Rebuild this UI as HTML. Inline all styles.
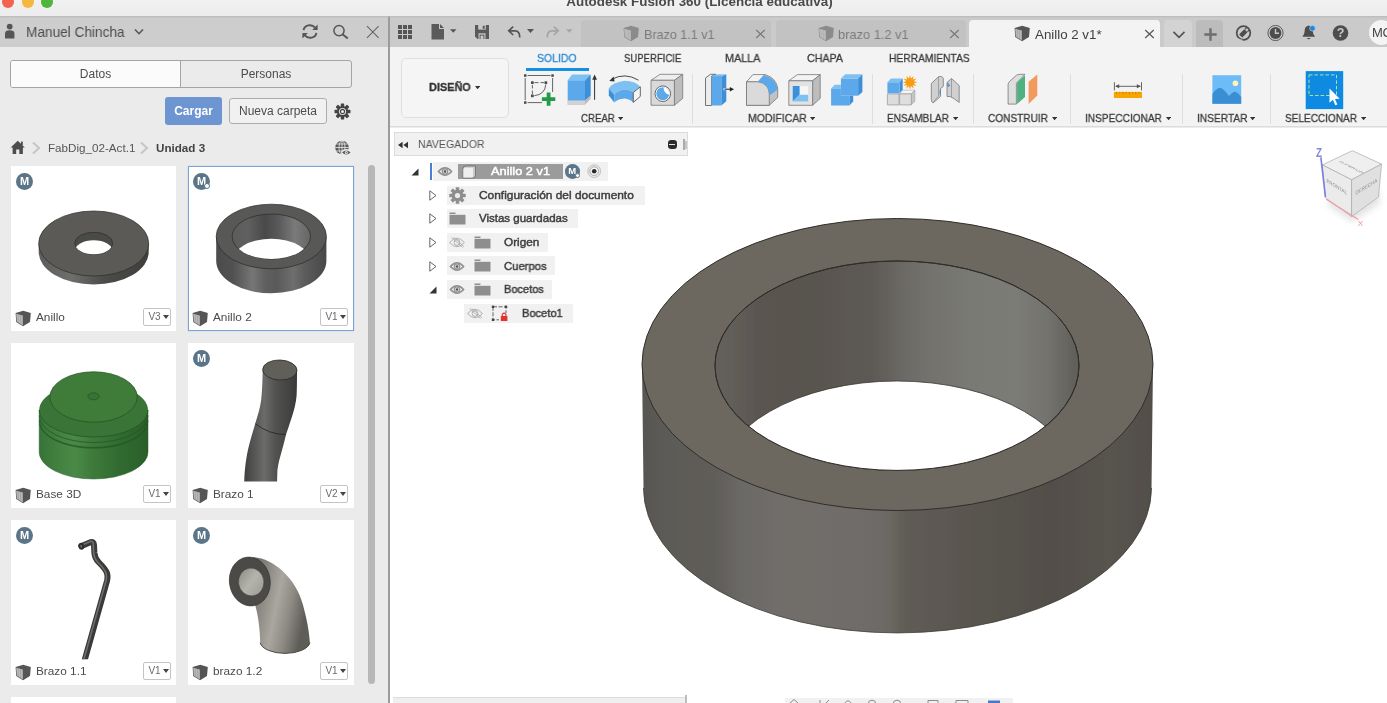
<!DOCTYPE html>
<html><head><meta charset="utf-8">
<style>
*{box-sizing:border-box;margin:0;padding:0}
html,body{width:1387px;height:703px;overflow:hidden;background:#ececec;font-family:"Liberation Sans",sans-serif;color:#444}
.a{position:absolute}
.t{position:absolute;white-space:nowrap;line-height:1}
#titlebar{left:0;top:0;width:1387px;height:16px;background:linear-gradient(#f1f1f1,#ececec)}
#title{left:0;width:1387px;top:-5px;text-align:center;font-weight:bold;font-size:13.4px;color:#4a4a4a;padding-left:12px}
.tl{position:absolute;width:12px;height:12px;border-radius:6px;top:-4px}
/* left panel */
#lp{left:0;top:16px;width:388px;height:687px;background:#ebebeb;overflow:hidden}
#lph{left:0;top:0;width:388px;height:31px;background:#cdcdcd}
#divider{left:388px;top:16px;width:2px;height:687px;background:#9b9b9b}
.card{position:absolute;width:165.3px;height:165px;background:#fff}
.card.sel{box-shadow:inset 0 0 0 1px #7ba3d8,0 0 1px #9dbbe2}
.mb{position:absolute;left:5.3px;top:7.1px;width:17px;height:17px;border-radius:9px;background:#5a7488;color:#fff;font-weight:bold;font-size:11px;text-align:center;line-height:17px}
.cl{position:absolute;left:25.8px;top:146.1px;font-size:11.8px;color:#4a4a4a;white-space:nowrap;line-height:1}
.vb{position:absolute;left:132px;top:142.3px;width:28.2px;height:17.5px;border:1px solid #c4c4c4;border-radius:2px;background:#fff;font-size:10px;color:#6a6a6a;line-height:15.6px;padding-left:4.6px;white-space:nowrap;letter-spacing:-0.2px}
.vb i{position:absolute;right:1.4px;top:5.6px;border:3.6px solid transparent;border-top:4.8px solid #444;border-bottom:0}
.cube{position:absolute;left:4.4px;top:144.4px}
/* right */
#tabbar{left:390px;top:16px;width:997px;height:31px;background:#cacaca}
#toolbar{left:390px;top:47px;width:997px;height:80px;background:#f3f3f3;border-bottom:1px solid #dcdcdc}
#canvas{left:390px;top:128px;width:997px;height:575px;background:#fff}
.tab{position:absolute;height:27px;border-radius:4px 4px 0 0;background:#c2c2c2}
.tab.act{background:#f3f3f3}
.tabt{position:absolute;top:8px;font-size:13px;color:#8c8c8c;white-space:nowrap;line-height:1}
.rt{position:absolute;top:54.5px;font-size:11px;color:#3c3c3c;white-space:nowrap;line-height:1;letter-spacing:-0.2px}
.gl{position:absolute;top:113px;font-size:11px;color:#3c3c3c;white-space:nowrap;line-height:1;letter-spacing:-0.2px}
.gl i,.dd{display:inline-block;border:2.6px solid transparent;border-top:3.6px solid #333;border-bottom:0;vertical-align:middle;margin-left:4px;margin-top:-2px}
.sep{position:absolute;top:74px;width:1px;height:50px;background:#dedede}
.nr{position:absolute;height:19px;background:#f1f1f1}
.nt{position:absolute;font-size:11.5px;color:#3d3d3d;white-space:nowrap;line-height:1;font-weight:bold;letter-spacing:-0.1px}
.t,.tabt,.cl,.vb,.mb,.nt,.gs{will-change:transform}
</style></head><body>

<div id="titlebar" class="a">
 <div class="tl" style="left:2px;background:#f4634f"></div>
 <div class="tl" style="left:21.5px;background:#f6b73e"></div>
 <div class="tl" style="left:41px;background:#4fb53c"></div>
 <div id="title" class="t">Autodesk Fusion 360 (Licencia educativa)</div>
</div>
<div id="lp" class="a">
 <div id="lph" class="a"></div>
</div>

<div id="divider" class="a"></div>
<div id="tabbar" class="a"></div>
<div id="toolbar" class="a"></div>
<div id="canvas" class="a"></div>
<div class="a" style="left:0;top:16px;width:1387px;height:2px;background:linear-gradient(#b9b9b9,rgba(190,190,190,0))"></div>

<!-- LEFT PANEL CONTENT (page coords) -->
<div id="L" class="a" style="left:0;top:0;width:388px;height:703px;overflow:hidden">
 <!-- header -->
 <svg class="a" style="left:4px;top:22px" width="12" height="18" viewBox="0 0 12 18"><circle cx="5.7" cy="4.6" r="2.9" fill="#555"/><path d="M1 16.5 V11.5 Q1 8.2 5.7 8.2 Q10.4 8.2 10.4 11.5 V16.5 Z" fill="#555"/></svg>
 <div class="t" style="left:25.5px;top:24.6px;font-size:14.6px;color:#4d4d4d;transform-origin:0 0;transform:scaleX(0.9349)">Manuel Chincha</div>
 <svg class="a" style="left:133px;top:27px" width="12" height="10" viewBox="0 0 12 10"><path d="M2 2.5 L6 6.7 L10 2.5" fill="none" stroke="#555" stroke-width="1.6"/></svg>
 <!-- refresh -->
 <svg class="a" style="left:300px;top:23px" width="20" height="17" viewBox="0 0 20 17"><path d="M3.6 7.2 A6.3 5.6 0 0 1 15 4.6" fill="none" stroke="#555" stroke-width="1.9"/><path d="M16.4 9.8 A6.3 5.6 0 0 1 5 12.4" fill="none" stroke="#555" stroke-width="1.9"/><path d="M17.6 1.6 V7 H12.2 Z" fill="#555"/><path d="M2.4 15.4 V10 H7.8 Z" fill="#555"/></svg>
 <!-- search -->
 <svg class="a" style="left:331px;top:23px" width="20" height="18" viewBox="0 0 20 18"><circle cx="8" cy="7.6" r="5.1" fill="none" stroke="#555" stroke-width="1.5"/><path d="M11.8 11.6 L16.8 15.6" stroke="#555" stroke-width="1.9"/></svg>
 <!-- close -->
 <svg class="a" style="left:365px;top:24px" width="16" height="16" viewBox="0 0 16 16"><path d="M2 2.2 L13.6 13.8 M13.6 2.2 L2 13.8" stroke="#666" stroke-width="1.1"/></svg>
 <!-- tabs -->
 <div class="a" style="left:10px;top:60px;width:342px;height:27.5px;border:1px solid #a4a4a4;border-radius:3px;background:#ebebeb"></div>
 <div class="a" style="left:11px;top:61px;width:170px;height:25.5px;background:#fbfbfb;border-right:1px solid #a4a4a4;border-radius:2px 0 0 2px"></div>
 <div class="t" style="left:11px;width:169px;top:68px;text-align:center;font-size:12px;color:#4d4d4d">Datos</div>
 <div class="t" style="left:181px;width:170px;top:68px;text-align:center;font-size:12px;color:#4d4d4d">Personas</div>
 <!-- buttons -->
 <div class="a" style="left:165px;top:97px;width:57px;height:27.5px;background:#6c95d2;border-radius:3px"></div>
 <div class="t" style="left:165px;width:57px;top:104.5px;text-align:center;font-size:12px;font-weight:bold;color:#fff">Cargar</div>
 <div class="a" style="left:228.5px;top:98px;width:98px;height:26px;border:1px solid #adadad;border-radius:3px;background:#f1f1f1"></div>
 <div class="t" style="left:228.5px;width:98px;top:105px;text-align:center;font-size:12px;color:#4d4d4d">Nueva carpeta</div>
 <svg class="a" id="gear1" style="left:334px;top:102.5px" width="17" height="17" viewBox="-8.5 -8.5 17 17"><g fill="#444"><circle r="5.6"/><g id="gt"><rect x="-1.7" y="-8" width="3.4" height="16" rx=".6"/></g><use href="#gt" transform="rotate(45)"/><use href="#gt" transform="rotate(90)"/><use href="#gt" transform="rotate(135)"/></g><circle r="3.6" fill="#ebebeb"/><circle r="2.1" fill="none" stroke="#444" stroke-width="1.2"/></svg>
 <!-- breadcrumb -->
 <svg class="a" style="left:9.800px;top:140.200px" width="15.500" height="15" viewBox="0 0 16 15" preserveAspectRatio="none"><path d="M8 .8 L15.3 7.6 H13.3 V14 H9.6 V9.6 H6.4 V14 H2.7 V7.6 H.7 Z" fill="#4d4d4d"/><rect x="11.3" y="1.6" width="1.9" height="3.6" fill="#4d4d4d"/></svg>
 <svg class="a" style="left:31px;top:141px" width="10" height="14" viewBox="0 0 10 14"><path d="M2 1.5 L8 7 L2 12.5" fill="none" stroke="#c6c6c6" stroke-width="2.1"/></svg>
 <div class="t" style="left:47.5px;top:141.5px;font-size:11.65px;color:#555">FabDig_02-Act.1</div>
 <svg class="a" style="left:139px;top:141px" width="10" height="14" viewBox="0 0 10 14"><path d="M2 1.5 L8 7 L2 12.5" fill="none" stroke="#c6c6c6" stroke-width="2.1"/></svg>
 <div class="t" style="left:155.5px;top:141.5px;font-size:11.65px;font-weight:bold;color:#444">Unidad 3</div>
 <!-- globe -->
 <svg class="a" style="left:334px;top:140px" width="18" height="17" viewBox="0 0 18 17"><circle cx="8" cy="7.5" r="6.8" fill="#5a5a5a"/><g stroke="#ebebeb" stroke-width=".8" fill="none"><ellipse cx="8" cy="7.5" rx="3" ry="6.8"/><path d="M1.2 7.5 H14.8 M2.2 4 H13.8 M2.2 11 H13.8 M8 .7 V14.3"/></g><ellipse cx="12.3" cy="12.6" rx="5.2" ry="3.6" fill="#ebebeb"/><path d="M8 12.6 Q12.3 8.6 16.6 12.6 Q12.3 16.6 8 12.6 Z" fill="#5a5a5a"/><circle cx="12.3" cy="12.6" r="1.5" fill="#ebebeb"/><circle cx="12.3" cy="12.6" r=".7" fill="#5a5a5a"/></svg>
 <!-- scrollbar -->
 <div class="a" style="left:368.3px;top:164.5px;width:7.2px;height:519.5px;border-radius:4px;background:#b7b7b7"></div>
 <div class="card" style="left:10.7px;top:166px"><svg class="a" style="left:0;top:0" width="166" height="165" viewBox="0 0 166 165">
<defs><linearGradient id="g1" x1="0" x2="1"><stop offset="0" stop-color="#5c5c5a"/><stop offset=".3" stop-color="#6e6e6c"/><stop offset=".6" stop-color="#4b4b49"/><stop offset="1" stop-color="#3e3e3c"/></linearGradient></defs>
<path d="M27.7 77.5 V86 A55 32.5 0 0 0 137.700 86 V77.5 Z" fill="url(#g1)"/>
<ellipse cx="82.700" cy="77.5" rx="55" ry="32.5" fill="#5c5a56" stroke="#2c2c2b" stroke-width=".7"/>
<clipPath id="c1"><ellipse cx="82.700" cy="77.3" rx="19" ry="11"/></clipPath>
<ellipse cx="82.700" cy="77.3" rx="19" ry="11" fill="#4a4a48" stroke="#2c2c2b" stroke-width=".7"/>
<ellipse cx="82.700" cy="85.3" rx="19" ry="11" fill="#fff" clip-path="url(#c1)"/>
</svg><div class="mb">M</div><svg class="cube" width="17" height="17" viewBox="0 0 17 17"><path d="M.6 3 L8.2 .8 L15.8 3 L15 12 L8 16.3 L1.2 12 Z" fill="#555"/><path d="M1.2 3.7 L7.8 5.6 V15.4 L1.8 11.6 Z" fill="#b9b9b9"/><path d="M3.3 4.5 V12.6 M5.6 5.1 V14" stroke="#9a9a9a" stroke-width=".6"/></svg><div class="cl">Anillo</div><div class="vb">V3<i></i></div></div><div class="card sel" style="left:187.5px;top:166px;width:166px"><svg class="a" style="left:0;top:0" width="166" height="165" viewBox="0 0 166 165">
<defs><linearGradient id="g2" x1="0" x2="1"><stop offset="0" stop-color="#4c4c4c"/><stop offset=".15" stop-color="#515151"/><stop offset=".33" stop-color="#767676"/><stop offset=".45" stop-color="#5f5f5f"/><stop offset=".55" stop-color="#5a5a5a"/><stop offset=".70" stop-color="#6e6e6e"/><stop offset=".80" stop-color="#5c5c5c"/><stop offset="1" stop-color="#484848"/></linearGradient>
<linearGradient id="g2b" x1="0" x2="1"><stop offset="0" stop-color="#5c5c5c"/><stop offset=".2" stop-color="#606060"/><stop offset=".42" stop-color="#494949"/><stop offset=".6" stop-color="#5a5a5a"/><stop offset=".8" stop-color="#7a7a7a"/><stop offset="1" stop-color="#666"/></linearGradient></defs>
<path d="M28.2 70.5 V95 A55.100 32.3 0 0 0 138.400 95 V70.5 Z" fill="url(#g2)"/>
<ellipse cx="83.300" cy="70.5" rx="55.100" ry="32.3" fill="#585856" stroke="#2a2a29" stroke-width=".7"/>
<clipPath id="c2"><ellipse cx="83.300" cy="70.5" rx="39.2" ry="22.5"/></clipPath>
<ellipse cx="83.300" cy="70.5" rx="39.2" ry="22.5" fill="url(#g2b)" stroke="#2a2a29" stroke-width=".7"/>
<ellipse cx="83.300" cy="95.3" rx="39.2" ry="22.5" fill="#fff" clip-path="url(#c2)"/>
</svg><div class="mb">M</div><div class="a" style="left:16.5px;top:16.5px;width:6px;height:6px;border-radius:3px;background:#fff;border:1px solid #5a7488"></div><svg class="cube" width="17" height="17" viewBox="0 0 17 17"><path d="M.6 3 L8.2 .8 L15.8 3 L15 12 L8 16.3 L1.2 12 Z" fill="#555"/><path d="M1.2 3.7 L7.8 5.6 V15.4 L1.8 11.6 Z" fill="#b9b9b9"/><path d="M3.3 4.5 V12.6 M5.6 5.1 V14" stroke="#9a9a9a" stroke-width=".6"/></svg><div class="cl">Anillo 2</div><div class="vb">V1<i></i></div></div><div class="card" style="left:10.7px;top:343px"><svg class="a" style="left:0;top:0" width="166" height="165" viewBox="0 0 166 165">
<defs><linearGradient id="g3" x1="0" x2="1"><stop offset="0" stop-color="#37733a"/><stop offset=".12" stop-color="#3f7d3d"/><stop offset=".32" stop-color="#4a8a47"/><stop offset=".5" stop-color="#3d7a3a"/><stop offset=".75" stop-color="#316a30"/><stop offset="1" stop-color="#2a5e29"/></linearGradient></defs>
<path d="M28.2 67 V109 A54.400 27 0 0 0 137 109 V67 Z" fill="url(#g3)" stroke="#2a5a28" stroke-width=".5"/>
<ellipse cx="82.600" cy="67" rx="54.400" ry="27" fill="#3a7436"/>
<path d="M28.2 67 A54.400 27 0 0 0 137 67 M28.2 72.500 A54.400 27 0 0 0 137 72.500 M28.2 77.500 A54.400 27 0 0 0 137 77.500 M28.600 81.500 A54.400 27 0 0 0 136.600 81.500" fill="none" stroke="#235423" stroke-width=".75"/>
<ellipse cx="82.600" cy="54" rx="43.700" ry="25.200" fill="#3f7c3a" stroke="#235423" stroke-width=".75"/>
<ellipse cx="82.500" cy="53.300" rx="5.700" ry="3.500" fill="#387335" stroke="#235423" stroke-width=".75"/>
</svg><svg class="cube" width="17" height="17" viewBox="0 0 17 17"><path d="M.6 3 L8.2 .8 L15.8 3 L15 12 L8 16.3 L1.2 12 Z" fill="#555"/><path d="M1.2 3.7 L7.8 5.6 V15.4 L1.8 11.6 Z" fill="#b9b9b9"/><path d="M3.3 4.5 V12.6 M5.6 5.1 V14" stroke="#9a9a9a" stroke-width=".6"/></svg><div class="cl">Base 3D</div><div class="vb">V1<i></i></div></div><div class="card" style="left:187.5px;top:343px;width:166px"><svg class="a" style="left:0;top:0" width="166" height="165" viewBox="0 0 166 165">
<defs><linearGradient id="g4" x1="0" x2="1"><stop offset="0" stop-color="#3e3e3c"/><stop offset=".12" stop-color="#4e4e4c"/><stop offset=".38" stop-color="#6b6b69"/><stop offset=".6" stop-color="#51514f"/><stop offset=".85" stop-color="#434341"/><stop offset="1" stop-color="#393937"/></linearGradient>
<clipPath id="c4"><rect x="0" y="0" width="166" height="138.500"/></clipPath></defs>
<g clip-path="url(#c4)">
<path d="M74.700 27 C74.500 40 74 50 73.200 56.800 C72 66 69.500 73 67.200 80.700 C64 92 61 101 59.200 110.500 C57.500 120 56.500 128 56.200 140 H89.100 C89.200 134 89.300 130 89.500 126.400 C90.500 120 91.500 116 93.100 110.500 C95 104 96.500 98 98 91.600 C100 86 101.500 81 103 76.700 C106 68 108 60 108.600 52.800 C109 45 109 35 109 27 Z" fill="url(#g4)"/>
<path d="M67.200 80.700 Q81 91.500 98 91.600" fill="none" stroke="#242423" stroke-width=".8"/>
<ellipse cx="91.850" cy="27" rx="17.200" ry="10" fill="#615f5a" stroke="#2a2a29" stroke-width=".8" transform="rotate(2 91.850 27)"/>
</g>
</svg><div class="mb">M</div><svg class="cube" width="17" height="17" viewBox="0 0 17 17"><path d="M.6 3 L8.2 .8 L15.8 3 L15 12 L8 16.3 L1.2 12 Z" fill="#555"/><path d="M1.2 3.7 L7.8 5.6 V15.4 L1.8 11.6 Z" fill="#b9b9b9"/><path d="M3.3 4.5 V12.6 M5.6 5.1 V14" stroke="#9a9a9a" stroke-width=".6"/></svg><div class="cl">Brazo 1</div><div class="vb">V2<i></i></div></div><div class="card" style="left:10.7px;top:519.7px"><svg class="a" style="left:0;top:0" width="166" height="165" viewBox="0 0 166 165">
<defs><clipPath id="c5"><rect x="0" y="0" width="166" height="139.200"/></clipPath></defs>
<g clip-path="url(#c5)" fill="none" stroke-linecap="round" stroke-linejoin="round">
<path d="M70.500 26 L79.500 22.200 Q82.800 21.300 83 25 L83.400 33 Q83.800 38 87.500 42 Q94.500 49 96 53 Q97 57 96 61 L72 146" stroke="#3a3a38" stroke-width="6"/>
<path d="M71.500 24.800 L79.500 21.400 Q82 20.800 82.300 24 L82.600 33 Q83 38 86.800 42.300 Q93.500 49 95 53 Q96 57 95 61 L71 146" stroke="#6e6e6c" stroke-width="1.600"/>
</g>
<ellipse cx="70.300" cy="26.300" rx="2.900" ry="3.500" fill="#2b2b2a" transform="rotate(-15 70.300 26.300)"/><ellipse cx="70.200" cy="26.300" rx="1.100" ry="1.500" fill="#666" transform="rotate(-15 70.200 26.300)"/>
</svg><div class="mb">M</div><svg class="cube" width="17" height="17" viewBox="0 0 17 17"><path d="M.6 3 L8.2 .8 L15.8 3 L15 12 L8 16.3 L1.2 12 Z" fill="#555"/><path d="M1.2 3.7 L7.8 5.6 V15.4 L1.8 11.6 Z" fill="#b9b9b9"/><path d="M3.3 4.5 V12.6 M5.6 5.1 V14" stroke="#9a9a9a" stroke-width=".6"/></svg><div class="cl">Brazo 1.1</div><div class="vb">V1<i></i></div></div><div class="card" style="left:187.5px;top:519.7px;width:166px"><svg class="a" style="left:0;top:0" width="166" height="165" viewBox="0 0 166 165">
<defs><linearGradient id="g6" x1="0" y1="0" x2="1" y2=".35"><stop offset="0" stop-color="#6a6862"/><stop offset=".3" stop-color="#8e8c85"/><stop offset=".52" stop-color="#a9a79f"/><stop offset=".75" stop-color="#8c8a83"/><stop offset="1" stop-color="#5f5d57"/></linearGradient>
<linearGradient id="g6h" x1="0" y1="0" x2="1" y2="1"><stop offset="0" stop-color="#8a8982"/><stop offset=".5" stop-color="#b4b3ac"/><stop offset="1" stop-color="#9a9992"/></linearGradient></defs>
<path d="M65.200 37.200 C85 38 108 58 115 84.900 C119 100 121 110 121.900 122.700 A25 12 0 0 1 72.200 122.700 C72 108 70 95 67.200 84.900 Z" fill="url(#g6)"/>
<path d="M121.900 122.700 A25 12 0 0 1 72.200 122.700" fill="none" stroke="#4a4844" stroke-width="1"/>
<ellipse cx="61.800" cy="61.500" rx="20.400" ry="24.500" fill="#4b4a47" stroke="#2f2f2d" stroke-width=".6" transform="rotate(-8 61.800 61.500)"/>
<ellipse cx="63.200" cy="62" rx="12.700" ry="14" fill="url(#g6h)" stroke="#3a3937" stroke-width=".5" transform="rotate(-8 63.200 62)"/>
</svg><div class="mb">M</div><svg class="cube" width="17" height="17" viewBox="0 0 17 17"><path d="M.6 3 L8.2 .8 L15.8 3 L15 12 L8 16.3 L1.2 12 Z" fill="#555"/><path d="M1.2 3.7 L7.8 5.6 V15.4 L1.8 11.6 Z" fill="#b9b9b9"/><path d="M3.3 4.5 V12.6 M5.6 5.1 V14" stroke="#9a9a9a" stroke-width=".6"/></svg><div class="cl">brazo 1.2</div><div class="vb">V1<i></i></div></div><div class="card" style="left:10.7px;top:696.8px"></div>
</div>
<!-- TAB BAR CONTENT (page coords) -->
<div id="TB" class="a" style="left:0;top:0;width:1387px;height:128px;pointer-events:none">
 <!-- grid -->
 <svg class="a" style="left:398px;top:25px" width="14" height="14" viewBox="0 0 14 14"><g fill="#555"><rect x="0" y="0" width="4" height="4"/><rect x="5" y="0" width="4" height="4"/><rect x="10" y="0" width="4" height="4"/><rect x="0" y="5" width="4" height="4"/><rect x="5" y="5" width="4" height="4"/><rect x="10" y="5" width="4" height="4"/><rect x="0" y="10" width="4" height="4"/><rect x="5" y="10" width="4" height="4"/><rect x="10" y="10" width="4" height="4"/></g></svg>
 <!-- file -->
 <svg class="a" style="left:431px;top:24px" width="14" height="16" viewBox="0 0 14 16"><path d="M.5 0 H8 V5 H13 V15.5 H.5 Z M9 0 L13 4 H9 Z" fill="#5a5a5a"/></svg>
 <svg class="a" style="left:450px;top:29.2px" width="6.500" height="4" viewBox="0 0 7 4"><path d="M0 0 H7 L3.500 4 Z" fill="#555"/></svg>
 <!-- save -->
 <svg class="a" style="left:475px;top:25px" width="14" height="14" viewBox="0 0 14 14"><path d="M0 0 H14 V14 H2.5 L0 11.500 Z" fill="#5a5a5a"/><rect x="3.200" y="0" width="7.600" height="4.600" fill="#cacaca"/><rect x="7.700" y=".8" width="2" height="3" fill="#5a5a5a"/><rect x="3.500" y="8.300" width="7" height="5.700" fill="#cacaca"/><rect x="4.600" y="9.600" width="4.800" height="4.400" fill="#5a5a5a"/><rect x="5.600" y="10.600" width="2.800" height="3.400" fill="#cacaca"/></svg>
 <!-- undo -->
 <svg class="a" style="left:507px;top:25px" width="15" height="14" viewBox="0 0 15 14"><path d="M6.200 1.600 L1.700 5.800 L6.200 10 M2 5.800 H8 Q12.800 5.800 12.800 12.600" fill="none" stroke="#555" stroke-width="1.700"/></svg>
 <svg class="a" style="left:527px;top:29.2px" width="7" height="4" viewBox="0 0 7 4"><path d="M0 0 H7 L3.500 4 Z" fill="#555"/></svg>
 <!-- redo -->
 <svg class="a" style="left:545px;top:25px" width="15" height="14" viewBox="0 0 15 14"><path d="M8.800 1.600 L13.300 5.800 L8.800 10 M13 5.800 H7 Q2.200 5.800 2.200 12.600" fill="none" stroke="#a4a4a4" stroke-width="1.700"/></svg>
 <svg class="a" style="left:566px;top:29.2px" width="6.500" height="4" viewBox="0 0 7 4"><path d="M0 0 H7 L3.500 4 Z" fill="#a4a4a4"/></svg>
 <!-- tabs -->
 <div class="tab" style="left:580.5px;width:190px;top:20px"></div>
 <div class="tab" style="left:775.5px;width:190.5px;top:20px"></div>
 <div class="tab act" style="left:969px;width:191px;top:20px"></div>
 <svg class="a" style="left:623px;top:25px;opacity:.5" width="17" height="17" viewBox="0 0 17 17"><use href="#cubeI"/></svg>
 <div class="tabt" style="left:643.5px;top:27.5px;color:#7b7b7b;transform-origin:0 0;transform:scaleX(0.9658)">Brazo 1.1 v1</div>
 <svg class="a" style="left:755px;top:29px" width="11" height="10" viewBox="0 0 11 10"><path d="M1.200 1 L9.700 9 M9.700 1 L1.200 9" stroke="#777" stroke-width="1.100"/></svg>
 <svg class="a" style="left:817.500px;top:25px;opacity:.5" width="17" height="17" viewBox="0 0 17 17"><use href="#cubeI"/></svg>
 <div class="tabt" style="left:837.8px;top:27.5px;color:#7b7b7b;transform-origin:0 0;transform:scaleX(0.9882)">brazo 1.2 v1</div>
 <svg class="a" style="left:949px;top:29px" width="11" height="10" viewBox="0 0 11 10"><path d="M1.200 1 L9.700 9 M9.700 1 L1.200 9" stroke="#777" stroke-width="1.100"/></svg>
 <svg class="a" style="left:1014px;top:25px" width="17" height="17" viewBox="0 0 17 17"><g id="cubeI"><path d="M.6 3 L8.200 .8 L15.800 3 L15 12 L8 16.300 L1.200 12 Z" fill="#555"/><path d="M1.200 3.700 L7.800 5.600 V15.400 L1.800 11.600 Z" fill="#b9b9b9"/><path d="M3.300 4.500 V12.600 M5.600 5.100 V14" stroke="#9a9a9a" stroke-width=".6"/></g></svg>
 <div class="tabt" style="left:1035.2px;top:27.5px;color:#3f3f3f;transform-origin:0 0;transform:scaleX(1.0239)">Anillo 2 v1*</div>
 <svg class="a" style="left:1144px;top:29px" width="11" height="10" viewBox="0 0 11 10"><path d="M1.200 1 L9.700 9 M9.700 1 L1.200 9" stroke="#555" stroke-width="1.200"/></svg>
 <!-- chevron btn -->
 <div class="a" style="left:1163.5px;top:20px;width:28.5px;height:27px;background:#d3d3d3;border-radius:4px 4px 0 0"></div>
 <svg class="a" style="left:1172px;top:30px" width="14" height="10" viewBox="0 0 14 10"><path d="M1.500 1.800 L7 7.300 L12.500 1.800" fill="none" stroke="#555" stroke-width="1.700"/></svg>
 <!-- plus btn -->
 <div class="a" style="left:1196px;top:20px;width:27px;height:27px;background:#bcbcbc;border-radius:4px 4px 0 0"></div>
 <svg class="a" style="left:1204px;top:27.500px" width="13" height="13" viewBox="0 0 13 13"><path d="M6.500 .3 V12.700 M.3 6.500 H12.700" stroke="#6e6e6e" stroke-width="2.400"/></svg>
 <!-- jobs -->
 <svg class="a" style="left:1234.500px;top:24.500px" width="17" height="17" viewBox="0 0 17 17"><circle cx="8.500" cy="8" r="6.800" fill="none" stroke="#4d4d4d" stroke-width="1.700"/><path d="M5 9.500 L9.300 5 L11.600 7.200 L7.300 11.700 Z M10 4.200 L11.500 2.800 M12.400 6.600 L13.900 5.200" fill="#4d4d4d" stroke="#4d4d4d" stroke-width="1.200"/><path d="M2.500 13.500 Q5 15.500 7.500 15.300" stroke="#cacaca" stroke-width="1.600" fill="none"/></svg>
 <!-- clock -->
 <svg class="a" style="left:1267px;top:24.500px" width="17" height="17" viewBox="0 0 17 17"><circle cx="8.500" cy="8" r="7.600" fill="none" stroke="#4d4d4d" stroke-width=".9"/><circle cx="8.500" cy="8" r="5.900" fill="#4d4d4d"/><path d="M8.500 4 V8.300 H12" stroke="#cacaca" stroke-width="1.400" fill="none"/></svg>
 <!-- bell -->
 <svg class="a" style="left:1300.500px;top:24px" width="16" height="18" viewBox="0 0 16 18"><path d="M7.700 1.500 Q3.600 2.300 3.600 7.300 Q3.600 11 1.300 12.800 H14.100 Q11.800 11 11.800 7.300 Q11.800 2.300 7.700 1.500 Z" fill="#4d4d4d"/><path d="M5.800 14 H9.600 Q7.700 16.600 5.800 14 Z" fill="#4d4d4d"/><circle cx="11.400" cy="4.300" r="2.800" fill="#1b8ae6" stroke="#cacaca" stroke-width=".6"/></svg>
 <!-- help -->
 <svg class="a" style="left:1332px;top:24.500px" width="17" height="17" viewBox="0 0 17 17"><circle cx="8.500" cy="8" r="7.800" fill="#4d4d4d"/><text x="8.500" y="12.300" text-anchor="middle" font-family="Liberation Sans" font-weight="bold" font-size="12.500" fill="#cacaca">?</text></svg>
 <!-- avatar -->
 <div class="a" style="left:1368.500px;top:19.500px;width:25px;height:25px;border-radius:13px;background:#f4f4f4"></div>
 <div class="t" style="left:1371.500px;top:25.500px;font-size:13px;color:#444;letter-spacing:-0.3px">MC</div>
</div>
<!-- TOOLBAR CONTENT -->
<div id="TL" class="a" style="left:0;top:0;width:1387px;height:128px">
<div class="a" style="left:401px;top:58px;width:108px;height:59.5px;border:1px solid #dedede;border-radius:5px;background:#f5f5f5"></div>
<div class="t" style="left:429px;top:81.8px;font-size:11px;font-weight:bold;color:#333;-webkit-text-stroke:.3px #333;transform-origin:0 0;transform:scaleX(0.9908);">DISEÑO</div><svg class="a" style="left:475.1px;top:86px" width="5.2" height="3.3" viewBox="0 0 10 6" preserveAspectRatio="none"><path d="M0 0 H10 L5 6 Z" fill="#333"/></svg>
<div class="t" style="left:536.7px;top:53.1px;font-size:11px;color:#2b8ad6;-webkit-text-stroke:.3px #2b8ad6;transform-origin:0 0;transform:scaleX(0.9524);">SOLIDO</div><div class="a" style="left:525.6px;top:67.6px;width:63px;height:3.2px;background:#158fe2"></div><div class="t" style="left:623.6px;top:53.1px;font-size:11px;color:#3a3a3a;-webkit-text-stroke:.3px #3a3a3a;transform-origin:0 0;transform:scaleX(0.8680);">SUPERFICIE</div><div class="t" style="left:725px;top:53.1px;font-size:11px;color:#3a3a3a;-webkit-text-stroke:.3px #3a3a3a;transform-origin:0 0;transform:scaleX(0.9812);">MALLA</div><div class="t" style="left:806.5px;top:53.1px;font-size:11px;color:#3a3a3a;-webkit-text-stroke:.3px #3a3a3a;transform-origin:0 0;transform:scaleX(0.9678);">CHAPA</div><div class="t" style="left:888.5px;top:53.1px;font-size:11px;color:#3a3a3a;-webkit-text-stroke:.3px #3a3a3a;transform-origin:0 0;transform:scaleX(0.9319);">HERRAMIENTAS</div>
<div class="t" style="left:580.7px;top:112.6px;font-size:11px;color:#3a3a3a;-webkit-text-stroke:.3px #3a3a3a;transform-origin:0 0;transform:scaleX(0.8776);">CREAR</div><svg class="a" style="left:618px;top:116.6px" width="5.2" height="3.3" viewBox="0 0 10 6" preserveAspectRatio="none"><path d="M0 0 H10 L5 6 Z" fill="#333"/></svg>
<div class="t" style="left:747.7px;top:112.6px;font-size:11px;color:#3a3a3a;-webkit-text-stroke:.3px #3a3a3a;transform-origin:0 0;transform:scaleX(0.9525);">MODIFICAR</div><svg class="a" style="left:809.7px;top:116.6px" width="5.2" height="3.3" viewBox="0 0 10 6" preserveAspectRatio="none"><path d="M0 0 H10 L5 6 Z" fill="#333"/></svg>
<div class="t" style="left:887px;top:112.6px;font-size:11px;color:#3a3a3a;-webkit-text-stroke:.3px #3a3a3a;transform-origin:0 0;transform:scaleX(0.9122);">ENSAMBLAR</div><svg class="a" style="left:952.5px;top:116.6px" width="5.2" height="3.3" viewBox="0 0 10 6" preserveAspectRatio="none"><path d="M0 0 H10 L5 6 Z" fill="#333"/></svg>
<div class="t" style="left:988.2px;top:112.6px;font-size:11px;color:#3a3a3a;-webkit-text-stroke:.3px #3a3a3a;transform-origin:0 0;transform:scaleX(0.9160);">CONSTRUIR</div><svg class="a" style="left:1052px;top:116.6px" width="5.2" height="3.3" viewBox="0 0 10 6" preserveAspectRatio="none"><path d="M0 0 H10 L5 6 Z" fill="#333"/></svg>
<div class="t" style="left:1085.3px;top:112.6px;font-size:11px;color:#3a3a3a;-webkit-text-stroke:.3px #3a3a3a;transform-origin:0 0;transform:scaleX(0.9182);">INSPECCIONAR</div><svg class="a" style="left:1165.8px;top:116.6px" width="5.2" height="3.3" viewBox="0 0 10 6" preserveAspectRatio="none"><path d="M0 0 H10 L5 6 Z" fill="#333"/></svg>
<div class="t" style="left:1197px;top:112.6px;font-size:11px;color:#3a3a3a;-webkit-text-stroke:.3px #3a3a3a;transform-origin:0 0;transform:scaleX(0.9247);">INSERTAR</div><svg class="a" style="left:1250.2px;top:116.6px" width="5.2" height="3.3" viewBox="0 0 10 6" preserveAspectRatio="none"><path d="M0 0 H10 L5 6 Z" fill="#333"/></svg>
<div class="t" style="left:1285px;top:112.6px;font-size:11px;color:#3a3a3a;-webkit-text-stroke:.3px #3a3a3a;transform-origin:0 0;transform:scaleX(0.9130);">SELECCIONAR</div><svg class="a" style="left:1360.5px;top:116.6px" width="5.2" height="3.3" viewBox="0 0 10 6" preserveAspectRatio="none"><path d="M0 0 H10 L5 6 Z" fill="#333"/></svg>
<div class="sep" style="left:691.9px"></div><div class="sep" style="left:871.9px"></div><div class="sep" style="left:972.6px"></div><div class="sep" style="left:1070.4px"></div><div class="sep" style="left:1182.2px"></div><div class="sep" style="left:1270.1px"></div>
<!--ICONS-->
</div>
<svg class="a" style="left:390px;top:47px" width="997" height="81" viewBox="390 47 997 81">
<g stroke-linejoin="round">
<!-- 1 sketch -->
<g fill="none" stroke="#555" stroke-width=".9">
 <path d="M527.600 75.500 H550.500 M552.600 78 V92 M525.200 78 V100.200 M527.600 102.600 H542"/>
 <path d="M534.500 82.600 H538.500 M540.500 82.600 H544 M532.400 85 V88.500 M532.400 90.500 V94 M545.800 84.500 Q545 94.500 534.300 95.700"/>
</g>
<g fill="#4a4a4a"><rect x="524" y="74.300" width="2.500" height="2.500"/><rect x="551.300" y="74.300" width="2.500" height="2.500"/><rect x="524" y="101.300" width="2.500" height="2.500"/>
<rect x="531" y="81.300" width="2.700" height="2.700"/><rect x="544.500" y="81.300" width="2.700" height="2.700"/><rect x="531" y="94.500" width="2.700" height="2.700"/></g>
<path d="M546.700 92.400 H550.500 V97.200 H555.300 V101 H550.500 V105.800 H546.700 V101 H541.900 V97.200 H546.700 Z" fill="#23994a"/>
<!-- 2 extrude -->
<path d="M567.700 100.500 H585 L590.700 95.500 V98.800 L585 104.800 H567.700 Z" fill="#bdbdbd"/>
<path d="M567.700 100.500 H585 V104.800 H567.700 Z" fill="#d2d2d2"/>
<path d="M567.700 80.300 L572 74.600 H590.700 L585 80.300 Z" fill="#7fc0f3"/>
<path d="M567.700 80.300 H585 V100.500 H567.700 Z" fill="#5ba8ea"/>
<path d="M585 80.300 L590.700 74.600 V95.500 L585 100.500 Z" fill="#3c8fd8"/>
<path d="M594.600 76.500 V99.800" stroke="#333" stroke-width="1"/><path d="M592.200 79.800 L594.600 74.600 L597 79.800 Z" fill="#333"/>
<!-- 3 revolve -->
<path d="M608.800 88.600 Q612 82.500 624.500 80.800 Q635.500 81 640.300 86.800 L633.300 92.500 Q630.500 89.600 624.500 89.400 Q616.500 90.500 614.300 94.800 Z" fill="#7fc0f3"/>
<path d="M608.800 88.600 L614.300 94.800 V102.600 L608.800 95.600 Z" fill="#3c8fd8"/>
<path d="M614.300 94.800 Q616.500 90.500 624.500 89.400 Q630.500 89.600 633.300 92.500 V102.400 Q630 98.800 624.500 98.400 Q617.500 99 614.300 102.600 Z" fill="#5ba8ea"/>
<path d="M633.300 92.500 L640.300 86.800 V96.400 L633.300 102.400 Z" fill="#f4f4f4" stroke="#555" stroke-width=".9"/>
<path d="M638.500 80.200 Q625 72 611.500 79.400" fill="none" stroke="#333" stroke-width=".9"/><path d="M609.300 81 L613.600 76.400 L614.600 81.400 Z" fill="#333"/>
<!-- 4 hole -->
<path d="M651 80.300 L660 74.300 H682.700 L674.400 80.300 Z" fill="#eeeeee" stroke="#777" stroke-width=".8"/>
<path d="M674.400 80.300 L682.700 74.300 V98.400 L674.400 105.300 Z" fill="#bdbdbd" stroke="#777" stroke-width=".8"/>
<path d="M651 80.300 H674.400 V105.300 H651 Z" fill="#d9d9d9" stroke="#777" stroke-width=".8"/>
<circle cx="662.800" cy="93.700" r="7.800" fill="#fff" stroke="#555" stroke-width=".9"/>
<circle cx="662.800" cy="93.700" r="6.500" fill="#5ba8ea"/>
<path d="M663.500 87.300 A6.500 6.500 0 0 1 669.300 94.800 Q663.800 94 663.500 87.300 Z" fill="#fff"/>
<!-- 5 press pull -->
<path d="M705.500 78 L710.400 74.300 H715.900 L711.600 76.100 V105.500 H705.500 Z" fill="#ececec" stroke="#666" stroke-width=".9"/>
<path d="M711.600 76.100 L717.200 74.300 H726.300 L721.400 76.700 Z" fill="#7fc0f3"/>
<path d="M711.600 76.100 H721.400 V105.500 H711.600 Z" fill="#5ba8ea"/>
<path d="M721.400 76.700 L726.300 74.300 V101.300 L721.400 105.500 Z" fill="#3c8fd8"/>
<rect x="723.500" y="88.200" width="3" height="2" fill="#f6f6f6"/>
<path d="M724.500 89.200 H731" stroke="#222" stroke-width="1"/><path d="M729.800 86.900 L734 89.200 L729.800 91.500 Z" fill="#222"/>
<!-- 6 fillet -->
<path d="M746.500 81.800 L753 74.600 H765 Q776 78 777.700 88 V97.500 L769.300 105.300 H746.500 Z" fill="#c2c2c2" stroke="#777" stroke-width=".8"/>
<path d="M746.500 81.800 L753 74.600 H765 L758 81.800 Z" fill="#f3f3f3" stroke="#777" stroke-width=".6"/>
<path d="M746.500 81.800 H758 Q769 83.500 769.300 94 V105.300 H746.500 Z" fill="#dadada" stroke="#777" stroke-width=".8"/>
<path d="M758 81.800 L763.500 75.200 Q776 78 777.700 89.500 L769.300 95.500 Q769.300 83.500 758 81.800 Z" fill="#5ba8ea"/>
<!-- 7 shell -->
<path d="M788.800 80.800 L797.400 74.600 H820.200 L812.600 80.800 Z" fill="#f3f3f3" stroke="#777" stroke-width=".8"/>
<path d="M812.600 80.800 L820.200 74.600 V98.400 L812.600 105.300 Z" fill="#bdbdbd" stroke="#777" stroke-width=".8"/>
<path d="M788.800 80.800 H812.600 V105.300 H788.800 Z" fill="#e2e2e2" stroke="#777" stroke-width=".8"/>
<rect x="792.700" y="86.100" width="15.500" height="15.400" fill="#f6f6f6"/>
<path d="M792.700 86.100 H799.600 V94.700 L792.700 101.500 Z" fill="#3c8fd8"/>
<path d="M792.700 101.500 L799.600 94.700 H808.200 V101.500 Z" fill="#7fc0f3"/>
<!-- 8 combine -->
<path d="M840.900 78.600 L845.200 74.300 H862.400 L858.100 78.600 Z" fill="#7fc0f3"/>
<path d="M858.100 78.600 L862.400 74.300 V92.100 L858.100 95.700 Z" fill="#3c8fd8"/>
<path d="M840.900 78.600 H858.100 V95.700 H840.900 Z" fill="#5ba8ea"/>
<path d="M831.100 88.400 L834.800 84.700 H840.900 V88.400 Z" fill="#7fc0f3"/>
<path d="M831.100 88.400 H840.900 V95.700 H849.500 V105.500 H831.100 Z" fill="#5ba8ea"/>
<path d="M849.500 95.700 H853.200 V101.200 L849.500 105.500 Z" fill="#3c8fd8"/>
<!-- 9 new component -->
<path d="M887.400 93.900 H899 V104.900 H887.400 Z" fill="#dcdcdc" stroke="#969696" stroke-width=".7"/>
<path d="M899.600 93.900 L902.700 90.200 H914.900 L911.300 93.900 Z" fill="#f4f4f4" stroke="#a0a0a0" stroke-width=".5"/>
<path d="M911.300 93.900 L914.900 90.200 V101.300 L911.300 104.900 Z" fill="#c4c4c4" stroke="#969696" stroke-width=".5"/>
<path d="M899.600 93.900 H911.300 V104.900 H899.600 Z" fill="#dedede" stroke="#969696" stroke-width=".7"/>
<path d="M887.400 82.300 L891 78.600 H902.700 L899.600 82.300 Z" fill="#7fc0f3"/>
<path d="M899.600 82.300 L902.700 78.600 V89.600 L899.600 93.300 Z" fill="#3c8fd8"/>
<path d="M887.400 82.300 H899.600 V93.300 H887.400 Z" fill="#5ba8ea"/>
<path d="M910.0 74.9 L911.0 78.5 L913.7 75.9 L912.8 79.5 L916.4 78.6 L913.8 81.3 L917.4 82.3 L913.8 83.3 L916.4 86.0 L912.8 85.1 L913.7 88.7 L911.0 86.1 L910.0 89.7 L909.0 86.1 L906.3 88.7 L907.2 85.1 L903.6 86.0 L906.2 83.3 L902.6 82.3 L906.2 81.3 L903.6 78.6 L907.2 79.5 L906.3 75.9 L909.0 78.5 Z" fill="#f89c10"/>
<!-- 10 joint -->
<path d="M931.300 83.500 L938.500 76.800 Q942.500 75.500 943.300 78.500 V86.500 L940.500 88.500 V96.500 L933 103 Q931.300 102 931.300 99.500 Z" fill="#d0d0d0" stroke="#777" stroke-width=".8"/>
<path d="M938.500 76.800 V96 L933 102.500" fill="none" stroke="#8a8a8a" stroke-width=".7"/>
<path d="M947 82.500 L951.500 78.500 L959.200 85.500 V102.500 L954.500 99 L950.300 96.500 H947 Z" fill="#d0d0d0" stroke="#777" stroke-width=".8"/>
<path d="M951.500 78.500 V97.500" fill="none" stroke="#8a8a8a" stroke-width=".7"/>
<path d="M940.300 90 V94.500 M948 82.800 V86.200 L950 85" stroke="#3c8fd8" stroke-width="1.300" fill="none"/>
<!-- 11 construct -->
<path d="M1008.100 84.500 Q1008.100 83 1009.500 81.500 L1016.500 75.200 Q1018 74.300 1020.500 74.300 H1025 L1016.400 83.200 V104.100 H1008.100 Z" fill="#dedede" stroke="#777" stroke-width=".8"/>
<path d="M1017.100 82.500 L1025 75.300 V96.900 L1017.100 104.100 Z" fill="#4db27e"/>
<path d="M1028.600 81.800 L1037.300 74.600 V95.500 L1028.600 104.100 Z" fill="#f29a5e"/>
<!-- 12 inspect -->
<path d="M1114.400 82.200 V90.400 M1141.500 82.200 V90.400 M1116 86.300 H1140" stroke="#555" stroke-width=".9" fill="none"/>
<path d="M1115 86.300 L1119.200 84.300 V88.300 Z M1141 86.300 L1136.800 84.300 V88.300 Z" fill="#555"/>
<rect x="1113.900" y="91.900" width="28.100" height="6.100" fill="#f7a500"/>
<path d="M1116.500 91.900 V94.300 M1119.700 91.900 V93.500 M1122.900 91.900 V94.300 M1126.100 91.900 V93.500 M1129.300 91.900 V94.300 M1132.500 91.900 V93.500 M1135.700 91.900 V94.300 M1138.900 91.900 V93.500" stroke="#c77a00" stroke-width=".8"/>
<!-- 13 insert -->
<rect x="1212.400" y="75.200" width="28.800" height="28.600" fill="#6ebcf7"/>
<path d="M1212.400 103.800 V94 Q1216 88.500 1219.500 87.800 Q1223.500 88 1229 96 Q1233 91.500 1235.500 91.800 Q1238.500 93 1241.200 97 V103.800 Z" fill="#3a8fd4"/>
<circle cx="1235.400" cy="83.300" r="2.800" fill="#fdf6b8"/>
<!-- 14 select -->
<rect x="1305.700" y="71.100" width="37.500" height="38" fill="#0e8ae2"/>
<rect x="1309" y="74.900" width="27.500" height="20.600" fill="none" stroke="#a7e6a0" stroke-width="1" stroke-dasharray="3.500 2"/>
<path d="M1329.500 88.600 V102.800 L1332.900 99.800 L1335.300 105.300 L1337.300 104.400 L1335 99 L1339.700 98.800 Z" fill="#fff"/>
</g>
</svg>
<!-- CANVAS CONTENT -->
<div id="CV" class="a" style="left:390px;top:128px;width:997px;height:575px;overflow:hidden"><div class="a" style="left:-390px;top:-128px;width:1387px;height:703px">
<svg class="a" style="left:600px;top:190px" width="600" height="470" viewBox="600 190 600 470">
<defs>
<linearGradient id="rs" gradientUnits="userSpaceOnUse" x1="642" x2="1153" y1="0" y2="0">
<stop offset="0" stop-color="#585651"/><stop offset=".04" stop-color="#5c5a56"/><stop offset=".143" stop-color="#5f5d59"/><stop offset=".20" stop-color="#6c6a67"/><stop offset=".29" stop-color="#716e6b"/><stop offset=".466" stop-color="#6e6b68"/><stop offset=".49" stop-color="#69665f"/><stop offset=".52" stop-color="#5f5b55"/><stop offset=".66" stop-color="#59554f"/><stop offset=".80" stop-color="#524e49"/><stop offset=".916" stop-color="#58544f"/><stop offset="1" stop-color="#524e49"/>
</linearGradient>
<linearGradient id="ri" gradientUnits="userSpaceOnUse" x1="715" x2="1079" y1="0" y2="0">
<stop offset="0" stop-color="#64615c"/><stop offset=".04" stop-color="#625f5a"/><stop offset=".118" stop-color="#5a5650"/><stop offset=".275" stop-color="#59554f"/><stop offset=".434" stop-color="#5d5a54"/><stop offset=".514" stop-color="#6b6965"/><stop offset=".593" stop-color="#73726e"/><stop offset=".71" stop-color="#7a7a75"/><stop offset=".83" stop-color="#7b7b76"/><stop offset=".91" stop-color="#74736e"/><stop offset=".973" stop-color="#66645f"/><stop offset="1" stop-color="#5e5c57"/>
</linearGradient>
<clipPath id="rc"><ellipse cx="897" cy="365.700" rx="182" ry="104.700"/></clipPath>
<filter id="rb" x="-5%" y="-5%" width="110%" height="110%"><feGaussianBlur stdDeviation=".6"/></filter>
</defs>
<g filter="url(#rb)">
<path d="M642 364.500 L643.500 488 A254 145 0 0 0 1151.500 488 L1153 364.500 Z" fill="url(#rs)"/>
<path d="M643.500 488 A254 145 0 0 0 1151.500 488" fill="none" stroke="#3f3d39" stroke-width=".8"/>
<ellipse cx="897.500" cy="364.500" rx="255.500" ry="146" fill="#6c6860" stroke="#2f2d2a" stroke-width="1"/>
<ellipse cx="897" cy="365.700" rx="182" ry="104.700" fill="url(#ri)" stroke="#2f2d2a" stroke-width="1"/>
<ellipse cx="897" cy="485" rx="180" ry="104" fill="#fff" stroke="#3a3835" stroke-width=".8" clip-path="url(#rc)"/>
<ellipse cx="897" cy="365.700" rx="182" ry="104.700" fill="none" stroke="#2f2d2a" stroke-width="1"/>
</g>
</svg>
<div class="a" style="left:394px;top:132px;width:294px;height:24.4px;background:#f1f1f1;border:1px solid #dcdcdc"></div>
<svg class="a" style="left:398px;top:140.5px" width="11" height="8" viewBox="0 0 11 8"><path d="M0 4 L4.600 .8 V7.200 Z M5.400 4 L10 .8 V7.200 Z" fill="#333"/></svg>
<div class="t" style="left:417.9px;top:139.2px;font-size:11px;color:#555;transform-origin:0 0;transform:scaleX(0.9585);">NAVEGADOR</div>
<div class="a" style="left:668px;top:140.200px;width:8.500px;height:8.600px;border-radius:3.200px;background:#2a2a2a"></div><div class="a" style="left:669.200px;top:143.900px;width:6.200px;height:1.200px;background:#e6e6e6"></div>
<div class="a" style="left:683px;top:139px;width:2px;height:11px;background:#ababab"></div><div class="a" style="left:685px;top:140.500px;width:2px;height:8.500px;background:#c6c6c6"></div>
<svg class="a" style="left:411px;top:167.8px" width="8" height="8" viewBox="0 0 8 8"><path d="M7.500 .5 V7.500 H.5 Z" fill="#333"/></svg><div class="a" style="left:429.8px;top:163.200px;width:2.400px;height:17px;background:#4a7fd6"></div><div class="nr" style="left:432.8px;top:161.700px;width:175px;height:19.500px"></div><svg class="a" style="left:437px;top:165.8px" width="16" height="11" viewBox="0 0 16 11"><path d="M.4 5.500 Q8 -3.400 15.600 5.500 Q8 14.400 .4 5.500 Z" fill="#919191"/><path d="M2.600 5.500 Q8 -.6 13.400 5.500 Q8 11.600 2.600 5.500 Z" fill="#f0f0f0"/><circle cx="8" cy="5.500" r="3.300" fill="#919191"/><circle cx="8" cy="5.500" r="2.100" fill="#e4e4e4"/><circle cx="8" cy="5.500" r="1.300" fill="#555"/></svg><div class="a" style="left:458.2px;top:163.800px;width:104.600px;height:15.600px;background:#9b9b9b"></div><svg class="a" style="left:461.5px;top:164.500px" width="15" height="14" viewBox="0 0 15 14"><path d="M1 4 Q1 1 4 1 H13.500 V10 Q13.500 13 10.500 13 H1 Z" fill="#c9c9c9" stroke="#6a6a6a" stroke-width=".8"/><path d="M1.400 4.200 Q1.400 2.800 3 2.800 H11 V11 Q11 12.600 9.400 12.600 H1.400 Z" fill="#eeeeee"/></svg><div class="t" style="left:491px;top:165.9px;font-size:11.5px;-webkit-text-stroke:.45px #fff;color:#fff;transform-origin:0 0;transform:scaleX(1.1119);">Anillo 2 v1</div><div class="a gs" style="left:565.2px;top:164.0px;width:14.600px;height:14.600px;border-radius:7.300px;background:#5a7488;color:#fff;font-weight:bold;font-size:9.500px;line-height:14.600px;text-align:center">M</div><div class="a" style="left:575px;top:173.3px;width:5px;height:5px;border-radius:2.500px;background:#fff;border:1px solid #5a7488"></div><svg class="a" style="left:586.5px;top:164.10000000000002px" width="15" height="15" viewBox="0 0 15 15"><circle cx="7.200" cy="7.200" r="6.400" fill="#e6e6e6" stroke="#bdbdbd" stroke-width=".9"/><circle cx="7.200" cy="7.200" r="4.300" fill="#fafafa" stroke="#9a9a9a" stroke-width=".8"/><circle cx="7.200" cy="7.200" r="2.300" fill="#2a2a2a"/></svg>
<svg class="a" style="left:429px;top:189.7px" width="8" height="11" viewBox="0 0 8 11"><path d="M.8 .8 L7 5.500 L.8 10.200 Z" fill="#fff" stroke="#555" stroke-width=".9"/></svg><div class="nr" style="left:446.8px;top:185.6px;width:198.200px"></div><svg class="a" style="left:449px;top:186.7px" width="17" height="17" viewBox="-8.500 -8.500 17 17"><g fill="#8e8e8e"><circle r="5.800"/><rect id="gt2" x="-1.800" y="-8.200" width="3.600" height="16.400" rx=".5"/><use href="#gt2" transform="rotate(45)"/><use href="#gt2" transform="rotate(90)"/><use href="#gt2" transform="rotate(135)"/></g><circle r="2.600" fill="#ececec"/></svg><div class="t" style="left:479.1px;top:189.79999999999998px;font-size:11.5px;-webkit-text-stroke:.45px #3d3d3d;color:#3d3d3d;transform-origin:0 0;transform:scaleX(1.0347);">Configuración del documento</div>
<svg class="a" style="left:429px;top:213.3px" width="8" height="11" viewBox="0 0 8 11"><path d="M.8 .8 L7 5.500 L.8 10.200 Z" fill="#fff" stroke="#555" stroke-width=".9"/></svg><div class="nr" style="left:446.8px;top:209.20000000000002px;width:131px"></div><svg class="a" style="left:449px;top:212.0px" width="17" height="13" viewBox="0 0 17 13"><path d="M.5 .5 H6.500 V2 H.5 Z" fill="#8e8e8e"/><path d="M.5 2.800 H16.500 V12.500 H.5 Z" fill="#8e8e8e"/></svg><div class="t" style="left:479.1px;top:213.4px;font-size:11.5px;-webkit-text-stroke:.45px #3d3d3d;color:#3d3d3d;transform-origin:0 0;transform:scaleX(1.0005);">Vistas guardadas</div>
<svg class="a" style="left:429px;top:236.9px" width="8" height="11" viewBox="0 0 8 11"><path d="M.8 .8 L7 5.500 L.8 10.200 Z" fill="#fff" stroke="#555" stroke-width=".9"/></svg><div class="nr" style="left:446.8px;top:232.8px;width:100.99999999999994px"></div><svg class="a" style="left:449px;top:236.9px" width="16" height="11" viewBox="0 0 16 11"><path d="M.6 5.500 Q8 -3 15.400 5.500 Q8 14 .6 5.500 Z" fill="none" stroke="#a8a8a8" stroke-width=".9"/><circle cx="8" cy="5.500" r="2.900" fill="none" stroke="#a8a8a8" stroke-width=".9"/><path d="M2.500 .5 L13.500 10.500 M4.500 .3 L15 9.800" stroke="#a8a8a8" stroke-width=".8"/></svg><svg class="a" style="left:473.5px;top:235.6px" width="17" height="13" viewBox="0 0 17 13"><path d="M.5 .5 H6.500 V2 H.5 Z" fill="#8e8e8e"/><path d="M.5 2.800 H16.500 V12.500 H.5 Z" fill="#8e8e8e"/></svg><div class="t" style="left:503.6px;top:237.0px;font-size:11.5px;-webkit-text-stroke:.45px #3d3d3d;color:#3d3d3d;transform-origin:0 0;transform:scaleX(1.0223);">Origen</div>
<svg class="a" style="left:429px;top:260.5px" width="8" height="11" viewBox="0 0 8 11"><path d="M.8 .8 L7 5.500 L.8 10.200 Z" fill="#fff" stroke="#555" stroke-width=".9"/></svg><div class="nr" style="left:446.8px;top:256.4px;width:108.49999999999994px"></div><svg class="a" style="left:449px;top:260.5px" width="16" height="11" viewBox="0 0 16 11"><path d="M.4 5.500 Q8 -3.400 15.600 5.500 Q8 14.400 .4 5.500 Z" fill="#919191"/><path d="M2.600 5.500 Q8 -.6 13.400 5.500 Q8 11.600 2.600 5.500 Z" fill="#f0f0f0"/><circle cx="8" cy="5.500" r="3.300" fill="#919191"/><circle cx="8" cy="5.500" r="2.100" fill="#e4e4e4"/><circle cx="8" cy="5.500" r="1.300" fill="#555"/></svg><svg class="a" style="left:473.5px;top:259.2px" width="17" height="13" viewBox="0 0 17 13"><path d="M.5 .5 H6.500 V2 H.5 Z" fill="#8e8e8e"/><path d="M.5 2.800 H16.500 V12.500 H.5 Z" fill="#8e8e8e"/></svg><div class="t" style="left:503.6px;top:260.6px;font-size:11.5px;-webkit-text-stroke:.45px #3d3d3d;color:#3d3d3d;transform-origin:0 0;transform:scaleX(0.9823);">Cuerpos</div>
<svg class="a" style="left:429px;top:285.8px" width="8" height="8" viewBox="0 0 8 8"><path d="M7.500 .5 V7.500 H.5 Z" fill="#333"/></svg><div class="nr" style="left:446.8px;top:279.7px;width:104.90000000000003px"></div><svg class="a" style="left:449px;top:283.8px" width="16" height="11" viewBox="0 0 16 11"><path d="M.4 5.500 Q8 -3.400 15.600 5.500 Q8 14.400 .4 5.500 Z" fill="#919191"/><path d="M2.600 5.500 Q8 -.6 13.400 5.500 Q8 11.600 2.600 5.500 Z" fill="#f0f0f0"/><circle cx="8" cy="5.500" r="3.300" fill="#919191"/><circle cx="8" cy="5.500" r="2.100" fill="#e4e4e4"/><circle cx="8" cy="5.500" r="1.300" fill="#555"/></svg><svg class="a" style="left:473.5px;top:282.5px" width="17" height="13" viewBox="0 0 17 13"><path d="M.5 .5 H6.500 V2 H.5 Z" fill="#8e8e8e"/><path d="M.5 2.800 H16.500 V12.500 H.5 Z" fill="#8e8e8e"/></svg><div class="t" style="left:503.6px;top:283.90000000000003px;font-size:11.5px;-webkit-text-stroke:.45px #3d3d3d;color:#3d3d3d;transform-origin:0 0;transform:scaleX(0.9576);">Bocetos</div>
<div class="nr" style="left:464.2px;top:303.59999999999997px;width:109px"></div><svg class="a" style="left:467px;top:307.7px" width="16" height="11" viewBox="0 0 16 11"><path d="M.6 5.500 Q8 -3 15.400 5.500 Q8 14 .6 5.500 Z" fill="none" stroke="#a8a8a8" stroke-width=".9"/><circle cx="8" cy="5.500" r="2.900" fill="none" stroke="#a8a8a8" stroke-width=".9"/><path d="M2.500 .5 L13.500 10.500 M4.500 .3 L15 9.800" stroke="#a8a8a8" stroke-width=".8"/></svg><svg class="a" style="left:491px;top:305.2px" width="18" height="17" viewBox="0 0 18 17"><path d="M2 1.800 H15 V8 M2 1.800 V14.800 H8" fill="none" stroke="#555" stroke-width=".9" stroke-dasharray="4 1.500"/><g fill="#444"><rect x=".8" y=".6" width="2.400" height="2.400"/><rect x="13.800" y=".6" width="2.400" height="2.400"/><rect x=".8" y="13.600" width="2.400" height="2.400"/></g><rect x="9.800" y="11" width="6.600" height="5" fill="#e0342c"/><path d="M11.300 11 V9.300 Q13.100 7 14.900 9.300 V11" fill="none" stroke="#e0342c" stroke-width="1.100"/></svg><div class="t" style="left:521.5px;top:307.8px;font-size:11.5px;-webkit-text-stroke:.45px #3d3d3d;color:#3d3d3d;transform-origin:0 0;transform:scaleX(0.9644);">Boceto1</div>
<svg class="a" style="left:1300px;top:135px" width="87" height="105" viewBox="1300 135 87 105">
<defs><filter id="cb" x="-10%" y="-10%" width="120%" height="120%"><feGaussianBlur stdDeviation=".45"/></filter>
<filter id="cs" x="-30%" y="-30%" width="160%" height="160%"><feGaussianBlur stdDeviation="3"/></filter></defs>
<path d="M1327 205 L1352 222 L1380 204 L1378 190 L1340 188 Z" fill="#d8d8d8" filter="url(#cs)" opacity=".7"/>
<g filter="url(#cb)">
<path d="M1352.300 150.700 L1322.400 164.900 L1351.600 179.800 L1381.500 164.100 Z" fill="#efefef" stroke="#a9a9a9" stroke-width=".7"/>
<path d="M1322.400 164.900 L1351.600 179.800 V216.500 L1325.400 197.800 Z" fill="#ebebeb" stroke="#a9a9a9" stroke-width=".7"/>
<path d="M1351.600 179.800 L1381.500 164.100 L1378.500 197 L1351.600 216.500 Z" fill="#e0e0e0" stroke="#a9a9a9" stroke-width=".7"/>
<path d="M1325.400 197 L1320.900 157.400" stroke="#7c7ce2" stroke-width="1.600"/>
<path d="M1326.200 199.300 L1358.300 219.500" stroke="#f39aa6" stroke-width="1.200"/>
<text transform="translate(1316 157) scale(.82 1)" font-family="Liberation Sans" font-weight="bold" font-size="12" fill="#8585e0">Z</text>
<text x="1357.800" y="226" font-family="Liberation Sans" font-size="8" fill="#f08c9a">X</text>
<g font-family="Liberation Sans" font-size="5.300" fill="#8e8e8e">
<text transform="matrix(.86 .44 -.5 .24 1338.500 161.500)">SUPERIOR</text>
<text transform="matrix(.84 .5 0 1 1326.500 182.500)">FRONTAL</text>
<text transform="matrix(.84 -.5 0 1 1355.500 195)">DERECHA</text>
</g>
</g>
</svg>
<div class="a" style="left:393px;top:696.5px;width:293px;height:8px;background:#efefef;border-top:1px solid #dcdcdc"></div>
<div class="a" style="left:685px;top:695px;width:1.500px;height:9px;background:#bdbdbd"></div>
<div class="a" style="left:785px;top:697.500px;width:228px;height:7px;background:#f1f1f1"></div>
<svg class="a" style="left:785px;top:697px" width="230" height="6" viewBox="785 697 230 6"><g fill="none" stroke="#8a8a8a" stroke-width="1"><path d="M790 703 L794 699.500 L798 703"/><path d="M820 703 V700 M826 703 L829 700"/><path d="M845 703 Q848 698.500 851 703"/><circle cx="872" cy="704" r="3.800"/><circle cx="897" cy="704" r="3.800"/><path d="M928 703 V700.500 H938 V703"/><path d="M956 703 V700.500 H968 V703"/></g><path d="M988 703 V700.500 H1000 V703 Z" fill="#4a78c8"/></svg>
</div></div>
</body></html>
